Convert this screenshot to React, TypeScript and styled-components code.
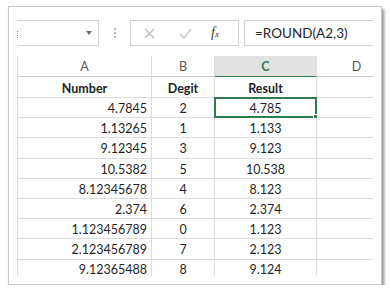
import React from 'react';
import styled, { createGlobalStyle } from 'styled-components';

const GREEN = '#2e7d4f';
const GRID = '#dcdcdc';

const GlobalStyle = createGlobalStyle`
    * { box-sizing: border-box; }
    body {
        margin: 0;
        background: #ffffff;
        font-family: Lato, "Liberation Sans", sans-serif;
    }
`;

const Frame = styled.div`
    margin: 6px 0 0 8px;
    width: 374px;
    height: 279px;
    border: 1px solid #c9c9c9;
    box-shadow: 2px 3px 3px rgba(0, 0, 0, 0.45);
    background: #ffffff;
    padding: 13px 8px 0 8px;
`;

const Content = styled.div`
    width: 356px;
    overflow: hidden;
`;

const Toolbar = styled.div`
    display: flex;
    align-items: center;
    height: 26px;
    width: 420px;
`;

const NameBox = styled.div`
    width: 82px;
    height: 26px;
    border: 1px solid #d2d2d2;
    border-left: none;
    display: flex;
    align-items: center;
    justify-content: space-between;
    padding-right: 6px;
`;

const Caret = styled.span`
    width: 1px;
    height: 7px;
    border-left: 1px dotted #5b8fd0;
    margin-top: 2px;
`;

const DropArrow = styled.span`
    width: 0;
    height: 0;
    border-left: 3.5px solid transparent;
    border-right: 3.5px solid transparent;
    border-top: 4px solid #6a6a6a;
`;

const Dots = styled.div`
    width: 31px;
    display: flex;
    flex-direction: column;
    align-items: center;
    gap: 2px;
    span {
        width: 2px;
        height: 2px;
        background: #b5b5b5;
    }
`;

const FxBox = styled.div`
    width: 109px;
    height: 26px;
    border: 1px solid #d2d2d2;
    display: flex;
    align-items: center;
`;

const FxIcon = styled.span`
    width: 36px;
    display: flex;
    justify-content: center;
`;

const FxText = styled.span`
    font-family: "Liberation Serif", serif;
    font-style: italic;
    font-size: 14px;
    color: #3a3a3a;
    margin-left: 8px;
    sub {
        font-size: 9px;
        vertical-align: 0;
    }
`;

const Formula = styled.div`
    margin-left: 5px;
    flex: 1;
    height: 26px;
    border: 1px solid #d2d2d2;
    display: flex;
    align-items: center;
    padding-left: 10px;
    font-size: 13.5px;
    color: #262626;
`;

const Grid = styled.div`
    margin-top: 10px;
    display: grid;
    grid-template-columns: 134px 63px 102px 80px;
    grid-template-rows: 21px 21px repeat(8, 20.2px);
    height: 220px;
    overflow: hidden;
    border-left: 1px solid ${GRID};
    width: 380px;
`;

const ColHead = styled.div<{ $active?: boolean }>`
    display: flex;
    align-items: center;
    justify-content: center;
    font-size: 12.5px;
    color: ${(p) => (p.$active ? GREEN : '#555555')};
    font-weight: ${(p) => (p.$active ? 700 : 400)};
    background: ${(p) => (p.$active ? '#e2e2e2' : '#ffffff')};
    border-right: 1px solid ${GRID};
    border-bottom: 1px solid ${(p) => (p.$active ? GREEN : '#cfcfcf')};
    padding-top: 1px;
`;

const Cell = styled.div<{ $align?: string; $bold?: boolean }>`
    position: relative;
    display: flex;
    align-items: center;
    justify-content: ${(p) => p.$align || 'center'};
    padding: 2px 4px 0 4px;
    font-size: 12.5px;
    font-weight: ${(p) => (p.$bold ? 700 : 400)};
    color: #1f1f1f;
    border-right: 1px solid ${GRID};
    border-bottom: 1px solid ${GRID};
`;

const Selection = styled.span`
    position: absolute;
    left: -1px;
    top: -1px;
    right: -1px;
    bottom: -1px;
    border: 2px solid ${GREEN};
    pointer-events: none;
`;

const Handle = styled.span`
    position: absolute;
    right: -3px;
    bottom: -3px;
    width: 5px;
    height: 5px;
    background: ${GREEN};
    border: 1px solid #ffffff;
`;

const rows = [
    ['4.7845', '2', '4.785'],
    ['1.13265', '1', '1.133'],
    ['9.12345', '3', '9.123'],
    ['10.5382', '5', '10.538'],
    ['8.12345678', '4', '8.123'],
    ['2.374', '6', '2.374'],
    ['1.123456789', '0', '1.123'],
    ['2.123456789', '7', '2.123'],
    ['9.12365488', '8', '9.124'],
];

const App: React.FC = () => {
    return (
        <>
            <GlobalStyle />
            <Frame>
                <Content>
                    <Toolbar>
                        <NameBox>
                            <Caret />
                            <DropArrow />
                        </NameBox>
                        <Dots>
                            <span />
                            <span />
                            <span />
                        </Dots>
                        <FxBox>
                            <FxIcon>
                                <svg width="11" height="11" viewBox="0 0 11 11">
                                    <path d="M1 1 L10 10 M10 1 L1 10" stroke="#bdbdbd" strokeWidth="1.2" fill="none" />
                                </svg>
                            </FxIcon>
                            <FxIcon>
                                <svg width="13" height="11" viewBox="0 0 13 11">
                                    <path d="M1 6 L5 10 L12 1" stroke="#bdbdbd" strokeWidth="1.2" fill="none" />
                                </svg>
                            </FxIcon>
                            <FxText>
                                f<sub>x</sub>
                            </FxText>
                        </FxBox>
                        <Formula>=ROUND(A2,3)</Formula>
                    </Toolbar>
                    <Grid>
                        <ColHead>A</ColHead>
                        <ColHead>B</ColHead>
                        <ColHead $active>C</ColHead>
                        <ColHead>D</ColHead>

                        <Cell $bold>Number</Cell>
                        <Cell $bold>Degit</Cell>
                        <Cell $bold>Result</Cell>
                        <Cell />

                        {rows.map((r, i) => (
                            <React.Fragment key={i}>
                                <Cell $align="flex-end">{r[0]}</Cell>
                                <Cell>{r[1]}</Cell>
                                <Cell>
                                    {r[2]}
                                    {i === 0 && (
                                        <Selection>
                                            <Handle />
                                        </Selection>
                                    )}
                                </Cell>
                                <Cell />
                            </React.Fragment>
                        ))}
                    </Grid>
                </Content>
            </Frame>
        </>
    );
};

export default App;
